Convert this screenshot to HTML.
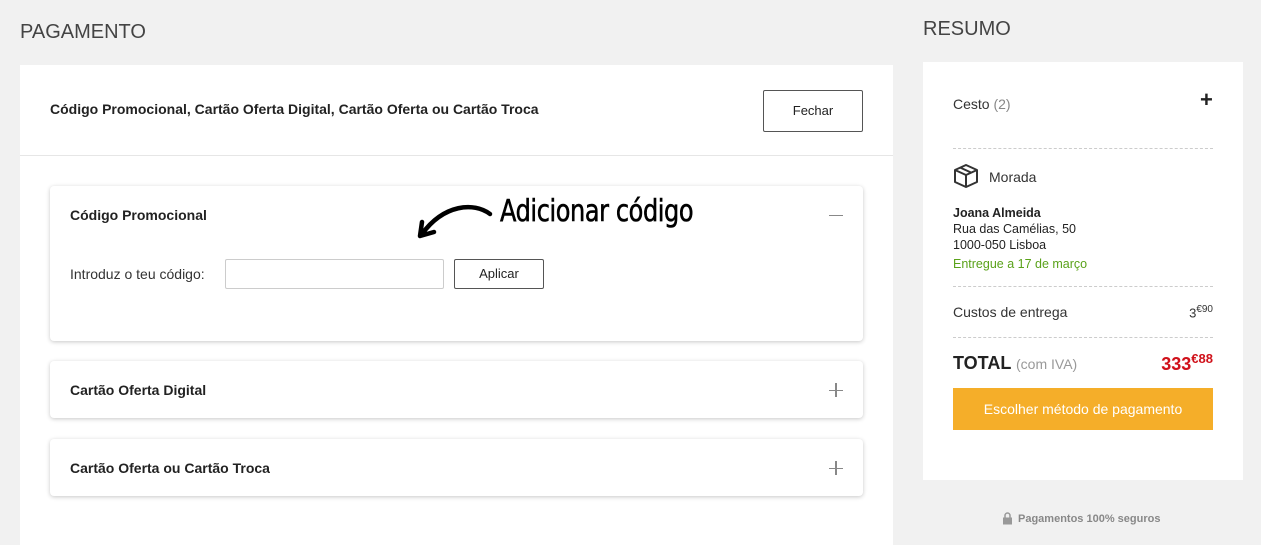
<!DOCTYPE html><html><head><meta charset="utf-8"><style>
*{box-sizing:border-box;margin:0;padding:0}
body{width:1261px;height:539px;background:#f1f1f1;font-family:"Liberation Sans",sans-serif;color:#222;position:relative;overflow:hidden}
.abs{position:absolute}
h1{position:absolute;font-weight:normal;font-size:20px;color:#444;letter-spacing:0}
.panel{background:#fff}
.card{position:absolute;left:50px;width:813px;background:#fff;border-radius:4px;box-shadow:0 1px 4px rgba(0,0,0,.22)}
.ct{position:absolute;left:20px;font-weight:bold;font-size:14px;color:#222}
.plus{position:absolute;right:20px;width:14px;height:14px}
.plus:before{content:"";position:absolute;left:0;top:6.5px;width:14px;height:1.5px;background:#888}
.plus.p:after{content:"";position:absolute;left:6.3px;top:0;width:1.5px;height:14px;background:#888}
.dash{position:absolute;left:953px;width:260px;border-top:1px dashed #ccc}
</style></head><body>
<h1 style="left:20px;top:21px">PAGAMENTO</h1>
<h1 style="left:923px;top:18px">RESUMO</h1>
<div class="abs panel" style="left:20px;top:65px;width:873px;height:480px"></div>
<div class="abs" style="left:20px;top:155px;width:873px;border-top:1px solid #e6e6e6"></div>
<div class="abs" style="left:50px;top:101px;font-weight:bold;font-size:14px">Código Promocional, Cartão Oferta Digital, Cartão Oferta ou Cartão Troca</div>
<div class="abs" style="left:763px;top:90px;width:100px;height:42px;border:1px solid #555;border-radius:2px;font-size:13px;text-align:center;line-height:40px">Fechar</div>
<div class="card" style="top:186px;height:155px">
<div class="ct" style="top:21px">Código Promocional</div>
<div class="plus" style="top:22px"></div>
<div class="abs" style="left:20px;top:80px;font-size:14px;color:#333">Introduz o teu código:</div>
<div class="abs" style="left:175px;top:73px;width:219px;height:30px;border:1px solid #ccc;border-radius:2px"></div>
<div class="abs" style="left:404px;top:73px;width:90px;height:30px;border:1px solid #555;border-radius:2px;font-size:13px;text-align:center;line-height:28px">Aplicar</div>
</div>
<svg class="abs" style="left:414px;top:200px" width="80" height="44" viewBox="0 0 80 44"><path d="M76 14 C60 2 30 4 8 34 M6 36 L8 22 M6 36 L20 32" fill="none" stroke="#000" stroke-width="4.5" stroke-linecap="round"/></svg>
<div class="abs" style="left:500px;top:194px;font-size:30px;font-family:'DejaVu Sans',sans-serif;letter-spacing:-0.5px;color:#000;-webkit-text-stroke:0.6px #000;transform:scaleX(0.8);transform-origin:left">Adicionar código</div>
<div class="card" style="top:361px;height:57px"><div class="ct" style="top:21px">Cartão Oferta Digital</div><div class="plus p" style="top:22px"></div></div>
<div class="card" style="top:439px;height:57px"><div class="ct" style="top:21px">Cartão Oferta ou Cartão Troca</div><div class="plus p" style="top:22px"></div></div>

<div class="abs panel" style="left:923px;top:62px;width:320px;height:418px"></div>
<div class="abs" style="left:953px;top:96px;font-size:14px;color:#333">Cesto <span style="color:#888">(2)</span></div>
<div class="abs" style="left:1200px;top:87px;font-size:22px;font-weight:bold">+</div>
<div class="dash" style="top:148px"></div>
<svg class="abs" style="left:953px;top:163px" width="26" height="26" viewBox="0 0 26 26"><path d="M13 2 L24 7 L24 19 L13 24 L2 19 L2 7 Z M2 7 L13 12 L24 7 M13 12 L13 24 M7 4.5 L18 9.5" fill="none" stroke="#333" stroke-width="2" stroke-linejoin="round"/></svg>
<div class="abs" style="left:989px;top:169px;font-size:14px;color:#333">Morada</div>
<div class="abs" style="left:953px;top:205px;font-size:12.5px;line-height:16px;color:#222"><b>Joana Almeida</b><br>Rua das Camélias, 50<br>1000-050 Lisboa<br><span style="color:#5aa21a;line-height:22px">Entregue a 17 de março</span></div>
<div class="dash" style="top:286px"></div>
<div class="abs" style="left:953px;top:304px;font-size:14px;color:#333">Custos de entrega</div>
<div class="abs" style="right:48px;top:304px;font-size:13px;color:#333">3<sup style="font-size:10px">€90</sup></div>
<div class="dash" style="top:337px"></div>
<div class="abs" style="left:953px;top:353px;font-size:18px;font-weight:bold;color:#222">TOTAL <span style="font-size:14px;font-weight:normal;color:#999">(com IVA)</span></div>
<div class="abs" style="right:48px;top:351px;font-size:18px;font-weight:bold;color:#d0111a">333<sup style="font-size:13px">€88</sup></div>
<div class="abs" style="left:953px;top:388px;width:260px;height:42px;background:#f5ae29;color:#fff;font-size:14px;text-align:center;line-height:42px">Escolher método de pagamento</div>
<svg class="abs" style="left:1002px;top:512px" width="11" height="13" viewBox="0 0 11 13"><rect x="1" y="5.5" width="9" height="7" fill="#999"/><path d="M3 6V3.5a2.5 2.5 0 0 1 5 0V6" fill="none" stroke="#999" stroke-width="1.5"/></svg>
<div class="abs" style="left:1018px;top:513px;font-size:11px;font-weight:bold;color:#888">Pagamentos 100% seguros</div>
</body></html>
